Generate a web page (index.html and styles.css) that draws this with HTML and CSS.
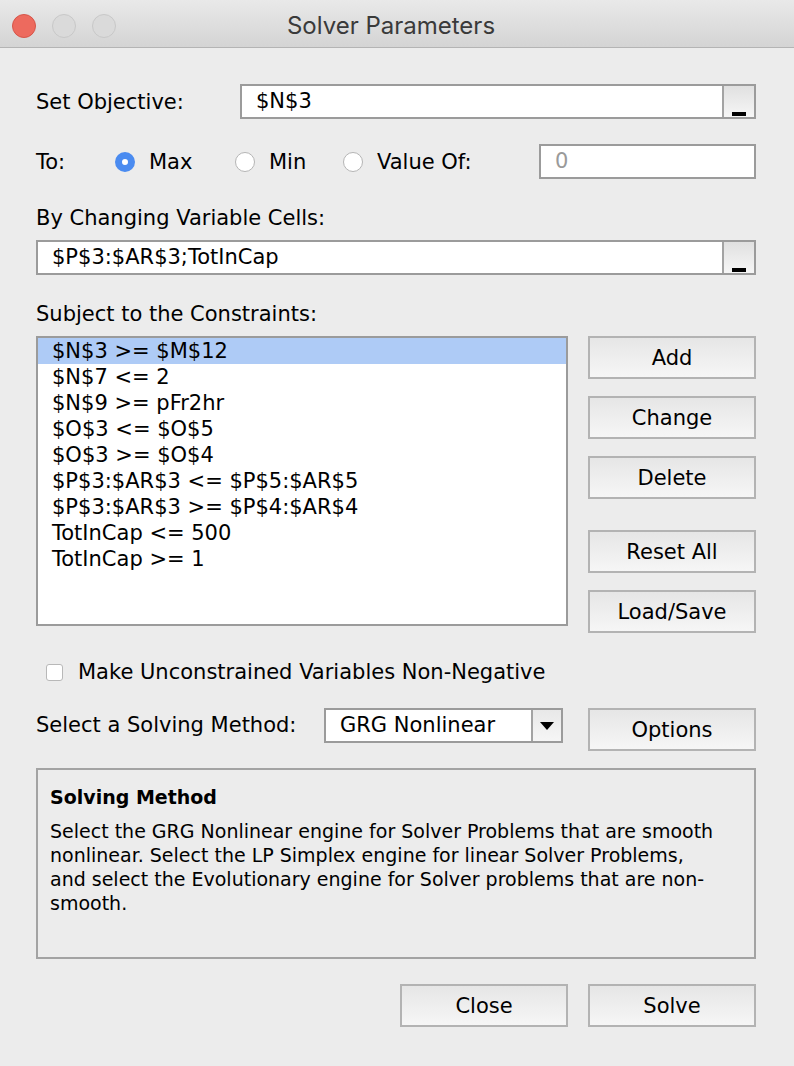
FILE: index.html
```html
<!DOCTYPE html>
<html lang="en">
<head>
    <meta charset="UTF-8">
    <meta name="viewport" content="width=device-width, initial-scale=1.0">
    <title>Solver Parameters</title>
    <link rel="stylesheet" href="styles.css">
</head>
<body>
    <div class="window">
        <div class="titlebar">
            <div class="lights">
                <span class="light red"></span>
                <span class="light"></span>
                <span class="light"></span>
            </div>
            <div class="title">Solver Parameters</div>
        </div>

        <div class="content">
            <!-- Objective -->
            <div class="row objective-row">
                <label class="row-label objective-label">Set Objective:</label>
                <div class="ref-field">
                    <span class="ref-text">$N$3</span>
                    <span class="ref-btn"><span class="ref-bar"></span></span>
                </div>
            </div>

            <!-- To -->
            <div class="row to-row">
                <span class="to-label">To:</span>
                <span class="radio-opt opt-max"><span class="radio checked"></span>Max</span>
                <span class="radio-opt opt-min"><span class="radio"></span>Min</span>
                <span class="radio-opt opt-value"><span class="radio"></span>Value Of:</span>
                <div class="value-field">0</div>
            </div>

            <div class="section-label changing-label">By Changing Variable Cells:</div>
            <div class="ref-field wide">
                <span class="ref-text">$P$3:$AR$3;TotInCap</span>
                <span class="ref-btn"><span class="ref-bar"></span></span>
            </div>

            <!-- Constraints -->
            <div class="section-label constraints-label">Subject to the Constraints:</div>
            <div class="constraints">
                <ul class="constraint-list">
                    <li class="selected">$N$3 &gt;= $M$12</li>
                    <li>$N$7 &lt;= 2</li>
                    <li>$N$9 &gt;= pFr2hr</li>
                    <li>$O$3 &lt;= $O$5</li>
                    <li>$O$3 &gt;= $O$4</li>
                    <li>$P$3:$AR$3 &lt;= $P$5:$AR$5</li>
                    <li>$P$3:$AR$3 &gt;= $P$4:$AR$4</li>
                    <li>TotInCap &lt;= 500</li>
                    <li>TotInCap &gt;= 1</li>
                </ul>
                <div class="side-buttons">
                    <button class="btn">Add</button>
                    <button class="btn">Change</button>
                    <button class="btn">Delete</button>
                    <button class="btn reset-btn">Reset All</button>
                    <button class="btn">Load/Save</button>
                </div>
            </div>

            <div class="check-row">
                <span class="checkbox"></span>
                <span>Make Unconstrained Variables Non-Negative</span>
            </div>

            <!-- Method -->
            <div class="row method-row">
                <span class="method-label">Select a Solving Method:</span>
                <div class="dropdown">
                    <span class="dropdown-text">GRG Nonlinear</span>
                    <span class="dropdown-btn">
                        <svg width="16" height="10" viewBox="0 0 16 10"><path d="M1 1 H15 L8 9 Z" fill="#000"/></svg>
                    </span>
                </div>
                <button class="btn options-btn">Options</button>
            </div>

            <div class="method-box">
                <div class="method-title">Solving Method</div>
                <p class="method-text">Select the GRG Nonlinear engine for Solver Problems that are smooth nonlinear. Select the LP Simplex engine for linear Solver Problems, and select the Evolutionary engine for Solver problems that are non-smooth.</p>
            </div>

            <div class="footer">
                <button class="btn">Close</button>
                <button class="btn">Solve</button>
            </div>
        </div>
    </div>
</body>
</html>
```

FILE: styles.css
```css
/* General styles */
body {
    margin: 0;
    padding: 0;
    background-color: #ececec;
    font-family: "DejaVu Sans", sans-serif;
    font-size: 21px;
    color: #000;
}
.window {
    width: 794px;
    height: 1066px;
    background-color: #ececec;
    overflow: hidden;
}

/* Title bar */
.titlebar {
    height: 47px;
    display: flex;
    align-items: center;
    justify-content: center;
    position: relative;
    background: linear-gradient(#e9e9e9, #d4d4d4);
    border-bottom: 1px solid #b4b4b4;
}
.lights {
    position: absolute;
    left: 12px;
    top: 14px;
    display: flex;
    gap: 16px;
}
.light {
    width: 22px;
    height: 22px;
    border-radius: 50%;
    background-color: #dadada;
    border: 1px solid #c8c8c8;
}
.light.red {
    background-color: #ed6a5e;
    border-color: #d65549;
}
.title {
    font-family: "Inter", sans-serif;
    font-size: 24px;
    color: #3a3a3a;
    margin-top: 4px;
    margin-right: 12px;
}

/* Content */
.content {
    padding: 0 38px 0 36px;
}
.row {
    display: flex;
    align-items: center;
}
.objective-row {
    margin-top: 36px;
    height: 35px;
}
.objective-label {
    width: 204px;
}
.ref-field {
    flex: 1;
    height: 35px;
    box-sizing: border-box;
    border: 2px solid #9b9b9b;
    background-color: #fff;
    display: flex;
    align-items: stretch;
}
.ref-field.wide {
    margin-top: 10px;
}
.ref-text {
    flex: 1;
    padding-left: 14px;
    line-height: 31px;
}
.ref-btn {
    width: 30px;
    border-left: 2px solid #a3a3a3;
    background: linear-gradient(#e0e0e0, #f6f6f6);
    display: flex;
    justify-content: center;
    align-items: flex-end;
}
.ref-bar {
    width: 14px;
    height: 4px;
    background-color: #000;
    margin-bottom: 1px;
}

/* To row */
.to-row {
    margin-top: 25px;
    height: 35px;
}
.to-label {
    width: 79px;
}
.radio-opt {
    display: flex;
    align-items: center;
}
.opt-max { width: 120px; }
.opt-min { width: 108px; }
.opt-value { width: 196px; }
.radio {
    width: 20px;
    height: 20px;
    box-sizing: border-box;
    border-radius: 50%;
    border: 1px solid #b5b5b5;
    background-color: #fff;
    margin-right: 14px;
}
.radio.checked {
    border: 7px solid #4a8bf0;
    background-color: #fff;
}
.value-field {
    flex: 1;
    height: 35px;
    box-sizing: border-box;
    border: 2px solid #9b9b9b;
    background-color: #fff;
    color: #9a9a9a;
    padding-left: 14px;
    line-height: 31px;
}

.section-label {
    line-height: 24px;
}
.changing-label {
    margin-top: 27px;
}
.constraints-label {
    margin-top: 27px;
}

/* Constraints */
.constraints {
    display: flex;
    align-items: flex-start;
    gap: 20px;
    margin-top: 10px;
}
.constraint-list {
    list-style: none;
    margin: 0;
    padding: 0;
    width: 532px;
    height: 290px;
    box-sizing: border-box;
    border: 2px solid #9b9b9b;
    background-color: #fff;
}
.constraint-list li {
    height: 26px;
    line-height: 26px;
    padding-left: 14px;
}
.constraint-list li.selected {
    background-color: #aecbf6;
}
.side-buttons {
    display: flex;
    flex-direction: column;
    gap: 17px;
}
.btn {
    width: 168px;
    height: 43px;
    box-sizing: border-box;
    border: 2px solid #b3b3b3;
    background: linear-gradient(#e6e6e6, #f6f6f6);
    font-family: "DejaVu Sans", sans-serif;
    font-size: 21px;
    color: #000;
    padding: 0;
}
.reset-btn {
    margin-top: 14px;
}

/* Checkbox */
.check-row {
    display: flex;
    align-items: center;
    margin-top: 27px;
    line-height: 24px;
    padding-left: 10px;
}
.checkbox {
    width: 17px;
    height: 17px;
    box-sizing: border-box;
    border: 1px solid #b8b8b8;
    border-radius: 3px;
    background-color: #fff;
    margin-right: 15px;
}

/* Method */
.method-row {
    margin-top: 24px;
    align-items: flex-start;
}
.method-label {
    width: 288px;
    line-height: 35px;
}
.dropdown {
    width: 239px;
    height: 35px;
    box-sizing: border-box;
    border: 2px solid #9b9b9b;
    background-color: #fff;
    display: flex;
    margin-right: 25px;
}
.dropdown-text {
    flex: 1;
    padding-left: 14px;
    line-height: 31px;
}
.dropdown-btn {
    width: 28px;
    border-left: 2px solid #a3a3a3;
    background: linear-gradient(#e8e8e8, #f6f6f6);
    display: flex;
    align-items: center;
    justify-content: center;
}
.method-box {
    margin-top: 17px;
    height: 191px;
    box-sizing: border-box;
    border: 2px solid #a3a3a3;
    padding: 15px 34px 0 12px;
}
.method-title {
    font-weight: bold;
    font-size: 19px;
    line-height: 24px;
}
.method-text {
    margin: 10px 0 0 0;
    font-size: 19px;
    line-height: 24px;
}

/* Footer */
.footer {
    display: flex;
    justify-content: flex-end;
    gap: 20px;
    margin-top: 25px;
}
```
